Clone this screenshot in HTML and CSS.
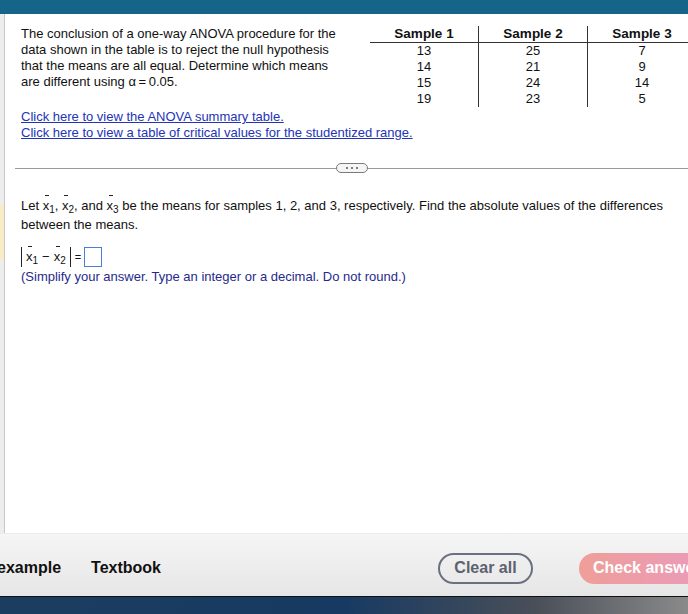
FILE: index.html
```html
<!DOCTYPE html>
<html>
<head>
  <link rel="stylesheet" href="styles.css">
</head>
<body>
  <div class="topbar"></div>

  <div class="main">
    <div class="gutter">
      <div class="gutter-mark"></div>
    </div>

    <div class="content">
      <div class="question-top">
        <p class="prompt">The conclusion of a one-way ANOVA procedure for the<br>
          data shown in the table is to reject the null hypothesis<br>
          that the means are all equal. Determine which means<br>
          are different using &alpha;&thinsp;=&thinsp;0.05.</p>

        <table class="samples">
          <tr>
            <th>Sample 1</th>
            <th>Sample 2</th>
            <th>Sample 3</th>
          </tr>
          <tr><td>13</td><td>25</td><td>7</td></tr>
          <tr><td>14</td><td>21</td><td>9</td></tr>
          <tr><td>15</td><td>24</td><td>14</td></tr>
          <tr><td>19</td><td>23</td><td>5</td></tr>
        </table>
      </div>

      <div class="links">
        <a href="#">Click here to view the ANOVA summary table.</a><br>
        <a href="#">Click here to view a table of critical values for the studentized range.</a>
      </div>

      <div class="divider">
        <div class="rule"></div>
        <div class="more-btn"><span></span><span></span><span></span></div>
        <div class="rule"></div>
      </div>

      <p class="ask">Let <span class="bar">x</span><sub>1</sub>, <span class="bar">x</span><sub>2</sub>, and <span class="bar">x</span><sub>3</sub> be the means for samples 1, 2, and 3, respectively. Find the absolute values of the differences between the means.</p>

      <div class="answer">
        <span class="abs"><span class="bar">x</span><sub>1</sub><span class="minus">&minus;</span><span class="bar">x</span><sub>2</sub></span>
        <span class="eq">=</span>
        <span class="answer-box"></span>
      </div>

      <p class="hint">(Simplify your answer. Type an integer or a decimal. Do not round.)</p>
    </div>
  </div>

  <div class="bottombar">
    <span class="tool-link first">example</span>
    <span class="tool-link">Textbook</span>
    <button class="btn-clear">Clear all</button>
    <button class="btn-check">Check answer</button>
  </div>

  <div class="dock"></div>
</body>
</html>
```

FILE: styles.css
```css
body {
  margin: 0;
  width: 688px;
  height: 614px;
  overflow: hidden;
  background: #fff;
  font-family: "Liberation Sans", Arial, sans-serif;
  font-size: 13px;
  color: #111;
}

.topbar {
  height: 14px;
  background: #15658a;
}

.main {
  display: flex;
  height: 519px;
}

.gutter {
  width: 4px;
  background: #ededed;
  border-right: 1px solid #c9c9c9;
  padding-top: 191px;
}

.gutter-mark {
  height: 55px;
  background: #f8ecc4;
}

.content {
  flex: 1;
  padding: 12px 0 0 16px;
  min-width: 0;
}

.question-top {
  display: flex;
  align-items: flex-start;
}

.prompt {
  width: 330px;
  flex-shrink: 0;
  margin: 0;
  line-height: 16px;
  white-space: nowrap;
}

/* data table */
.samples {
  margin-left: 19px;
  border-collapse: collapse;
  flex-shrink: 0;
}

.samples th,
.samples td {
  width: 108px;
  height: 16px;
  padding: 0;
  text-align: center;
  line-height: 16px;
}

.samples th {
  font-weight: bold;
  font-size: 13.5px;
  border-bottom: 1.5px solid #333;
}

.samples th + th,
.samples td + td {
  border-left: 1.5px solid #333;
}

.links {
  margin-top: 2px;
  line-height: 15.5px;
}

.links a {
  color: #2234b8;
  text-decoration: underline;
}

/* separator with the "..." pill */
.divider {
  display: flex;
  align-items: center;
  margin: 23px 0 0 -6px;
  height: 10px;
}

.rule {
  flex: 1;
  height: 1px;
  background: #9a9a9a;
}

.more-btn {
  width: 30px;
  height: 8px;
  border: 1px solid #7a7a7a;
  border-radius: 5px;
  background: #f5f5f5;
  display: flex;
  align-items: center;
  justify-content: center;
  gap: 3px;
}

.more-btn span {
  width: 2px;
  height: 2px;
  background: #555;
  border-radius: 50%;
}

.ask {
  margin: 23px 0 0 0;
  padding-right: 20px;
  line-height: 19px;
}

sub {
  font-size: 10px;
  line-height: 0;
  vertical-align: -3px;
}

.bar {
  display: inline-block;
  position: relative;
}

.bar::before {
  content: "";
  position: absolute;
  top: -1px;
  left: 2px;
  width: 4px;
  border-top: 1px solid #222;
}

.answer {
  display: flex;
  align-items: center;
  margin-top: 13px;
  height: 20px;
}

.abs {
  border-left: 1px solid #222;
  border-right: 1px solid #222;
  height: 20px;
  line-height: 20px;
  padding: 0 4px 0 4px;
}

.minus {
  margin: 0 4px;
}

.eq {
  margin: 0 3px 0 4px;
  font-size: 11px;
}

.answer-box {
  width: 16px;
  height: 18px;
  border: 1px solid #4a7fd6;
}

.hint {
  margin: 0;
  padding-top: 2px;
  line-height: 16px;
  color: #1f2a8c;
}

/* footer bar */
.bottombar {
  height: 63px;
  display: flex;
  align-items: center;
  padding-top: 6px;
  background: linear-gradient(#f5f5f5, #e6e6e6);
  border-top: 1px solid #ebebeb;
  box-sizing: border-box;
}

.tool-link {
  font-weight: bold;
  font-size: 16px;
  color: #111;
  margin-left: 30px;
  flex-shrink: 0;
}

.tool-link.first {
  margin-left: -3px;
}

.btn-clear,
.btn-check {
  font-family: "Liberation Sans", Arial, sans-serif;
  font-weight: bold;
  font-size: 16px;
  height: 31px;
  border-radius: 16px;
  box-sizing: border-box;
  white-space: nowrap;
  flex-shrink: 0;
}

.btn-clear {
  margin-left: 277px;
  width: 95px;
  padding: 0;
  background: transparent;
  border: 2px solid #6b7080;
  color: #5c6170;
}

.btn-check {
  margin-left: 46px;
  padding: 0 14px;
  border: none;
  color: #fff;
  background: linear-gradient(90deg, #ef9e98, #ea9bbd);
}

.dock {
  height: 18px;
  border-top: 1px solid #111;
  background: linear-gradient(90deg, #1b3d5f, #173a62 50%, #4a4f58 78%, #8a8a8a);
}
```
